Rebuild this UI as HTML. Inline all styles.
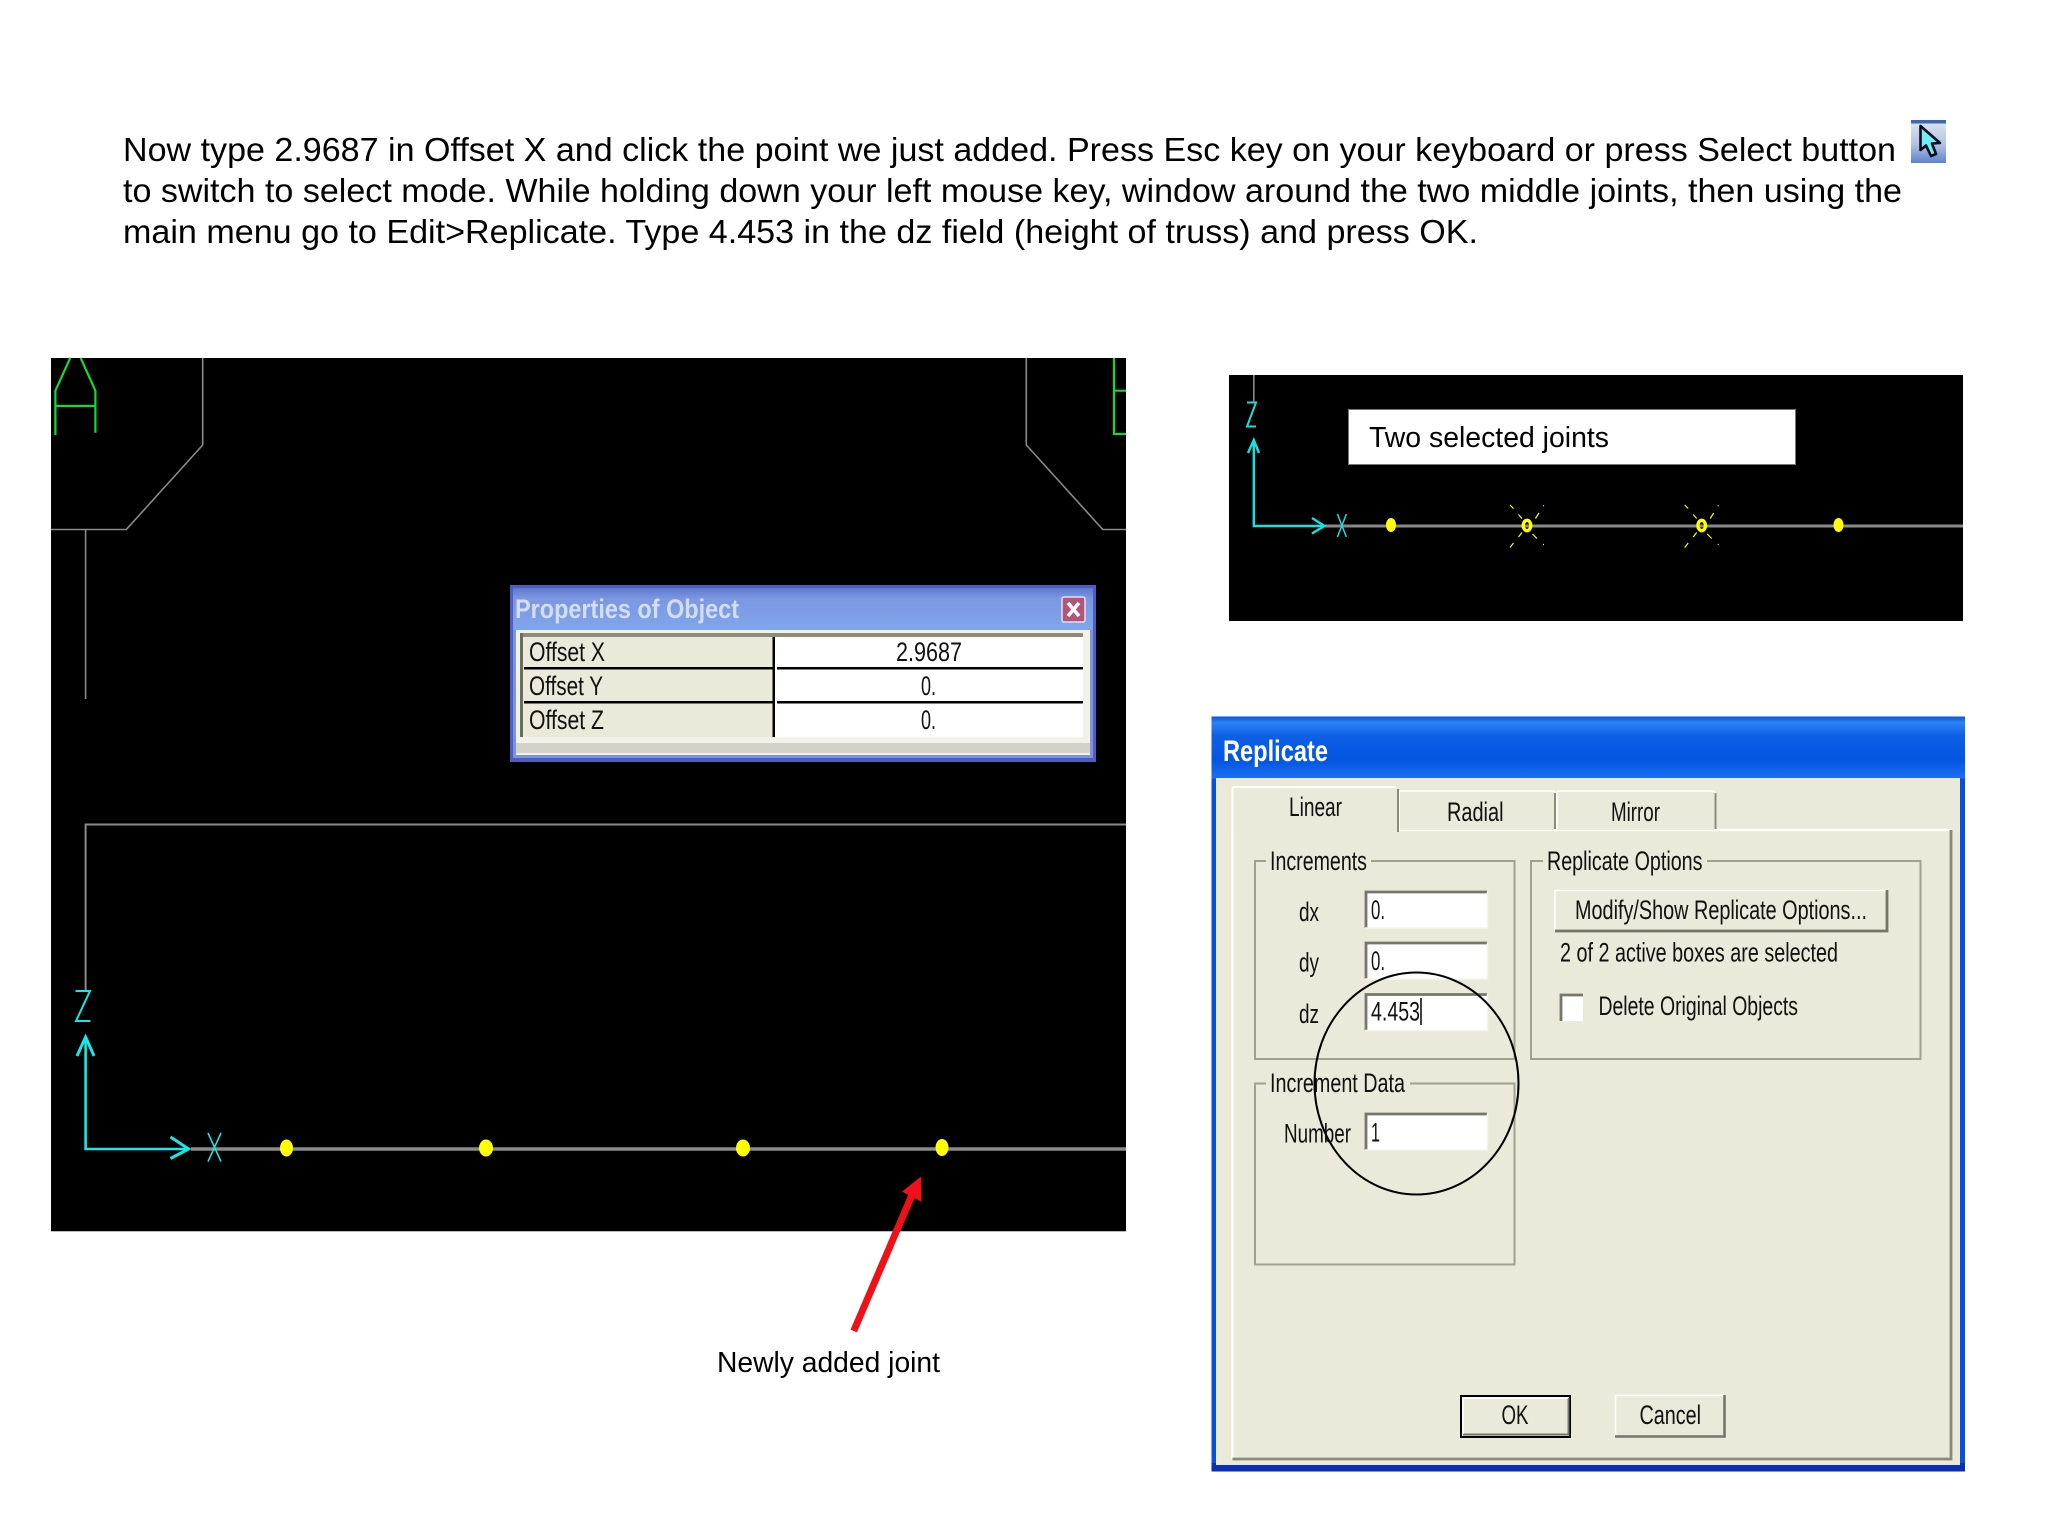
<!DOCTYPE html>
<html lang="en">
<head>
<meta charset="utf-8">
<title>Replicate step</title>
<style>
html,body{margin:0;padding:0;background:#fff;width:2048px;height:1536px;overflow:hidden}
svg{display:block}
text{font-family:"Liberation Sans",sans-serif;fill:#111}
.b{font-size:33px;fill:#000}
.d{font-size:27px}
.g{fill:none;stroke:#a2a18f;stroke-width:2}
</style>
</head>
<body>
<svg xmlns="http://www.w3.org/2000/svg" width="2048" height="1536" viewBox="0 0 2048 1536">
<defs>
<linearGradient id="rt" x1="0" y1="0" x2="0" y2="1">
<stop offset="0" stop-color="#0a55dc"/><stop offset=".1" stop-color="#2d83f2"/><stop offset=".3" stop-color="#0f60e6"/><stop offset=".7" stop-color="#0455e2"/><stop offset="1" stop-color="#1a70f2"/>
</linearGradient>
<linearGradient id="pt" x1="0" y1="0" x2="0" y2="1">
<stop offset="0" stop-color="#5f78d2"/><stop offset=".25" stop-color="#7b97e0"/><stop offset="1" stop-color="#7fa6ec"/>
</linearGradient>
<linearGradient id="ic" x1="0" y1="0" x2="0" y2="1">
<stop offset="0" stop-color="#dfe6f2"/><stop offset=".55" stop-color="#b4c4e4"/><stop offset="1" stop-color="#5f82cc"/>
</linearGradient>
</defs>

<!-- Paragraph -->
<text class="b" x="123" y="161" textLength="1773" lengthAdjust="spacingAndGlyphs">Now type 2.9687 in Offset X and click the point we just added. Press Esc key on your keyboard or press Select button</text>
<text class="b" x="123" y="202" textLength="1779" lengthAdjust="spacingAndGlyphs">to switch to select mode. While holding down your left mouse key, window around the two middle joints, then using the</text>
<text class="b" x="123" y="243" textLength="1355" lengthAdjust="spacingAndGlyphs">main menu go to Edit&gt;Replicate. Type 4.453 in the dz field (height of truss) and press OK.</text>

<!-- Select icon -->
<rect x="1911" y="120" width="35" height="43" fill="url(#ic)"/>
<rect x="1911" y="120" width="35" height="3.5" fill="#3f66b4"/>
<path d="M1920.5 126 L1920.5 150 L1926 145.5 L1931 156 L1936 154 L1932 143.5 L1940 143 Z" fill="#6ff0f0" stroke="#0a0a20" stroke-width="2.6" stroke-linejoin="round"/>

<!-- Left black panel -->
<rect x="51" y="358" width="1075" height="873" fill="#000"/>
<rect x="51" y="1231" width="1075" height="1" fill="#bbb"/>
<g fill="none" stroke="#8a8a8a" stroke-width="1.6">
<path d="M202.7 358V445L126.3 529.5H51"/>
<path d="M1026.3 358V445L1102.8 529.5H1126"/>
<path d="M85.6 530V699"/>
<path d="M85.6 990V824.5H1126" stroke-width="2"/>
<path d="M191 1149H1126" stroke-width="3.4"/>
</g>
<g fill="none" stroke="#12d83a" stroke-width="2.2">
<path d="M55.4 435V390.7L70.2 358"/>
<path d="M80.7 358L95.4 390.7V432.7"/>
<path d="M55.4 406H95.4"/>
<path d="M1114 358V434H1126M1114 390.7H1126"/>
</g>
<g fill="none" stroke="#19e6e6" stroke-width="2.6">
<path d="M85.6 1037V1149H188"/>
<path d="M77 1056L85.6 1037L94 1056" stroke-width="3"/>
<path d="M170.5 1137L188.7 1149L170.5 1158.5" stroke-width="3"/>
<path d="M75.5 991H90L76 1021H90.5" stroke-width="2"/>
<path d="M208 1133L221 1161.6M221 1133L208 1161.6" stroke-width="1.6"/>
</g>
<g fill="#ffff00">
<ellipse cx="286.5" cy="1148" rx="6.5" ry="8.5"/>
<ellipse cx="486" cy="1148" rx="7" ry="8.5"/>
<ellipse cx="743" cy="1148" rx="7" ry="8.5"/>
<ellipse cx="942" cy="1147.5" rx="6.5" ry="8.5"/>
</g>

<!-- Properties of Object -->
<rect x="510" y="585" width="586" height="177" fill="#4e5dc0"/>
<rect x="513" y="588" width="580" height="42" fill="url(#pt)"/>
<rect x="513" y="630" width="580" height="128" fill="#7d94dc"/>
<rect x="516" y="630" width="574" height="125" fill="#f3f2e9"/>
<rect x="516" y="743" width="574" height="10" fill="#d4d1c9"/>
<rect x="520" y="633" width="563" height="104" fill="#fff"/>
<rect x="520" y="633" width="563" height="4" fill="#8e8d78"/>
<rect x="520" y="633" width="3" height="104" fill="#6e6d5c"/>
<rect x="523" y="637" width="250" height="100" fill="#ebe9d9"/>
<rect x="524" y="667" width="249" height="2.5" fill="#000"/>
<rect x="524" y="701" width="249" height="2.5" fill="#000"/>
<rect x="777" y="667" width="306" height="2.5" fill="#000"/>
<rect x="777" y="701" width="306" height="2.5" fill="#000"/>
<rect x="772.5" y="637" width="2.5" height="100" fill="#000"/>
<text x="515" y="618" textLength="224" lengthAdjust="spacingAndGlyphs" style="font-size:27px;font-weight:bold;fill:#d3def6">Properties of Object</text>
<rect x="1062" y="597" width="23" height="25" rx="2" fill="#b2557c" stroke="#dfe3f2" stroke-width="1.5"/>
<path d="M1068 603L1079 616M1079 603L1068 616" stroke="#fff" stroke-width="3.6"/>
<text class="d" x="529" y="661" textLength="76" lengthAdjust="spacingAndGlyphs">Offset X</text>
<text class="d" x="529" y="695" textLength="74" lengthAdjust="spacingAndGlyphs">Offset Y</text>
<text class="d" x="529" y="729" textLength="75" lengthAdjust="spacingAndGlyphs">Offset Z</text>
<text class="d" x="896" y="661" textLength="66" lengthAdjust="spacingAndGlyphs">2.9687</text>
<text class="d" x="921" y="695" textLength="15" lengthAdjust="spacingAndGlyphs">0.</text>
<text class="d" x="921" y="729" textLength="15" lengthAdjust="spacingAndGlyphs">0.</text>

<!-- Red arrow and caption -->
<path d="M853.7 1331L912 1195" stroke="#f01018" stroke-width="7" fill="none"/>
<path d="M920.5 1177.5L903 1191.5L921 1201Z" fill="#f01018" stroke="#f01018" stroke-width="1"/>
<text x="717" y="1372" textLength="223" lengthAdjust="spacingAndGlyphs" style="font-size:29px;fill:#000">Newly added joint</text>

<!-- Top right panel -->
<rect x="1229" y="375" width="734" height="246" fill="#000"/>
<g fill="none" stroke="#8a8a8a">
<path d="M1253.8 375V402" stroke-width="1.6"/>
<path d="M1325 526H1963" stroke-width="3"/>
</g>
<rect x="1348.5" y="409.5" width="447" height="55" fill="#fff" stroke="#777" stroke-width="1"/>
<text x="1369" y="447" textLength="240" lengthAdjust="spacingAndGlyphs" style="font-size:29px;fill:#000">Two selected joints</text>
<g fill="none" stroke="#19e0e0" stroke-width="2.4">
<path d="M1253.8 440V526H1323"/>
<path d="M1248 453L1253.8 440L1259 453"/>
<path d="M1312 518L1324.5 526L1312 533.5"/>
<path d="M1247 402.5H1256L1247 426.5H1256" stroke-width="2"/>
<path d="M1337.4 514L1346.4 537M1346.4 514L1337.4 537" stroke-width="1.5"/>
</g>
<g fill="#ffff00">
<ellipse cx="1391" cy="525" rx="5" ry="7"/>
<ellipse cx="1838.5" cy="525" rx="5" ry="7"/>
</g>
<g id="sel" fill="none" stroke="#ffff00">
<ellipse cx="1527" cy="525.5" rx="3.8" ry="5.2" stroke-width="3.4"/>
<path stroke-width="1.2" d="M1510 505L1513.5 508.5M1518.5 514.5L1522 518.5M1535.5 518.5L1539 513M1543 506L1544 505.5M1522 532.5L1518.5 537M1532.5 534L1537 538.5M1513.5 543L1510 547.5M1543 544.5L1544 544.5"/>
</g>
<use href="#sel" x="174.7"/>

<!-- Replicate dialog -->
<rect x="1211.5" y="716.5" width="753.5" height="755" rx="4" fill="#0a4fdc"/>
<rect x="1211.5" y="716.5" width="753.5" height="62" fill="url(#rt)"/>
<rect x="1211.5" y="1463" width="753.5" height="8.5" fill="#0a2eb4"/>
<rect x="1216" y="778" width="744" height="687" fill="#ebe9d9"/>
<text x="1223" y="761" textLength="105" lengthAdjust="spacingAndGlyphs" style="font-size:30px;font-weight:bold;fill:#fff">Replicate</text>

<!-- Tabs and page -->
<path d="M1232.5 1459V830H1951V1459Z" fill="#ebe9d9"/>
<path d="M1232.5 1459V830H1951" fill="none" stroke="#fff" stroke-width="2.2"/>
<path d="M1951 830V1459H1232.5" fill="none" stroke="#8b8a78" stroke-width="2.8"/>
<path d="M1399 830V793Q1399 791 1401 791H1553Q1555 791 1555 793V830" fill="#ebe9d9" stroke="#fff" stroke-width="1.5"/>
<path d="M1555 793V829" stroke="#8b8a78" stroke-width="2"/>
<path d="M1557 830V793Q1557 791 1559 791H1713Q1715 791 1715 793V830" fill="#ebe9d9" stroke="#fff" stroke-width="1.5"/>
<path d="M1715.5 793V829" stroke="#8b8a78" stroke-width="2"/>
<path d="M1232.5 832V789Q1232.5 787 1235 787H1396" fill="#ebe9d9" stroke="#fff" stroke-width="2"/>
<rect x="1233.5" y="788" width="164" height="44" fill="#ebe9d9"/>
<path d="M1398 789V832" stroke="#8b8a78" stroke-width="2"/>
<text class="d" x="1289" y="816" textLength="53" lengthAdjust="spacingAndGlyphs">Linear</text>
<text class="d" x="1447" y="821" textLength="56.5" lengthAdjust="spacingAndGlyphs">Radial</text>
<text class="d" x="1611" y="821" textLength="49" lengthAdjust="spacingAndGlyphs">Mirror</text>

<!-- Groups -->
<rect class="g" x="1255" y="861" width="259.5" height="198"/>
<rect class="g" x="1531" y="861" width="389.5" height="198"/>
<rect class="g" x="1255" y="1083.5" width="259.5" height="181"/>
<rect x="1266" y="850" width="105" height="22" fill="#ebe9d9"/>
<rect x="1543" y="850" width="164" height="22" fill="#ebe9d9"/>
<rect x="1266" y="1072" width="144" height="22" fill="#ebe9d9"/>
<text class="d" x="1270" y="870" textLength="97" lengthAdjust="spacingAndGlyphs">Increments</text>
<text class="d" x="1547" y="870" textLength="155.5" lengthAdjust="spacingAndGlyphs">Replicate Options</text>
<text class="d" x="1270" y="1092" textLength="135" lengthAdjust="spacingAndGlyphs">Increment Data</text>

<!-- Inputs -->
<g id="inp">
<rect x="1365" y="891" width="122.5" height="37" fill="#fff"/>
<path d="M1366 928V892H1487" fill="none" stroke="#77766a" stroke-width="2.8"/>
<path d="M1487.5 892V928H1365" fill="none" stroke="#f6f5ec" stroke-width="1.6"/>
</g>
<use href="#inp" y="51"/>
<use href="#inp" y="102.5"/>
<use href="#inp" y="222"/>
<text class="d" x="1299" y="921" textLength="20" lengthAdjust="spacingAndGlyphs">dx</text>
<text class="d" x="1299" y="971.5" textLength="20" lengthAdjust="spacingAndGlyphs">dy</text>
<text class="d" x="1299" y="1023" textLength="20" lengthAdjust="spacingAndGlyphs">dz</text>
<text class="d" x="1371" y="919" textLength="14" lengthAdjust="spacingAndGlyphs">0.</text>
<text class="d" x="1371" y="970" textLength="14" lengthAdjust="spacingAndGlyphs">0.</text>
<text class="d" x="1371" y="1020.5" textLength="49" lengthAdjust="spacingAndGlyphs">4.453</text>
<path d="M1421 998V1025" stroke="#000" stroke-width="1.5"/>
<text class="d" x="1284" y="1142.5" textLength="67" lengthAdjust="spacingAndGlyphs">Number</text>
<text class="d" x="1371" y="1141.5" textLength="9" lengthAdjust="spacingAndGlyphs">1</text>

<!-- Modify button, labels, checkbox -->
<rect x="1555" y="890" width="332.5" height="41.5" fill="#ebe9d9"/>
<path d="M1555 931V890.5H1887" fill="none" stroke="#fff" stroke-width="1.6"/>
<path d="M1887 890V931H1555" fill="none" stroke="#76756a" stroke-width="2.8"/>
<text class="d" x="1575" y="919" textLength="292" lengthAdjust="spacingAndGlyphs">Modify/Show Replicate Options...</text>
<text class="d" x="1560" y="961.7" textLength="278" lengthAdjust="spacingAndGlyphs">2 of 2 active boxes are selected</text>
<rect x="1560" y="994" width="23" height="27" fill="#fff"/>
<path d="M1561 1021V995H1583" fill="none" stroke="#77766a" stroke-width="2.8"/>
<text class="d" x="1598.5" y="1015" textLength="199.5" lengthAdjust="spacingAndGlyphs">Delete Original Objects</text>

<!-- OK / Cancel -->
<rect x="1461" y="1396" width="109" height="41" fill="#ebe9d9" stroke="#000" stroke-width="2"/>
<path d="M1463 1434.5H1568.5V1398" fill="none" stroke="#76756a" stroke-width="2"/>
<path d="M1463 1434V1398H1568" fill="none" stroke="#fff" stroke-width="1.4"/>
<text class="d" x="1501.5" y="1424" textLength="27" lengthAdjust="spacingAndGlyphs">OK</text>
<rect x="1615" y="1395" width="110" height="42.5" fill="#ebe9d9"/>
<path d="M1615.5 1437V1395.5H1725" fill="none" stroke="#fff" stroke-width="1.6"/>
<path d="M1724.5 1395V1436.5H1615" fill="none" stroke="#76756a" stroke-width="2.6"/>
<text class="d" x="1639.5" y="1424" textLength="61.5" lengthAdjust="spacingAndGlyphs">Cancel</text>

<!-- Ellipse highlight -->
<ellipse cx="1416.5" cy="1083.5" rx="102" ry="111" fill="none" stroke="#000" stroke-width="2"/>
</svg>
</body>
</html>
